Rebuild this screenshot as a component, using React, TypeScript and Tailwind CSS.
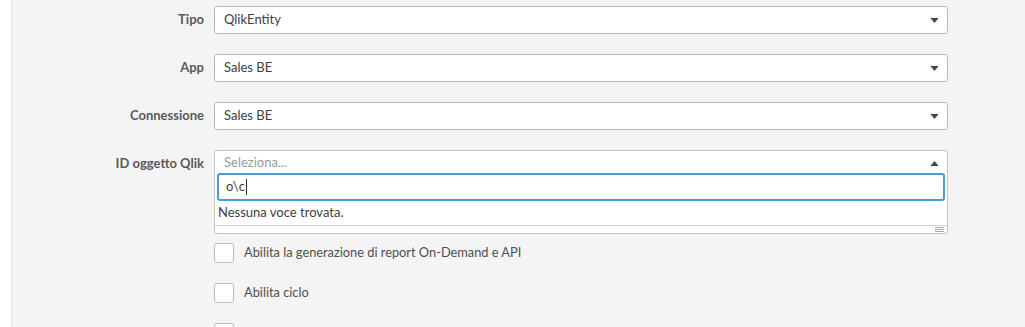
import React from "react";

const font = { fontFamily: "Lato, 'Open Sans', Arial, sans-serif" };

function Caret({ up = false }: { up?: boolean }) {
  return (
    <svg width="9" height="5" viewBox="0 0 10 6" className="shrink-0">
      {up ? <path d="M0 6 L5 0 L10 6 Z" fill="#454545" /> : <path d="M0 0 L10 0 L5 6 Z" fill="#454545" />}
    </svg>
  );
}

function SelectRow({ label, value }: { label: string; value: string }) {
  return (
    <>
      <div className="h-[28px] flex items-center justify-end text-[13px] font-bold text-[#595959]">{label}</div>
      <div className="h-[28px] flex items-center justify-between bg-white border border-[#b8b8b8] rounded-[3px] pl-[9px] pr-[8px] text-[13px] text-[#404040]">
        <span>{value}</span>
        <Caret />
      </div>
    </>
  );
}

function Checkbox({ label }: { label: string }) {
  return (
    <div className="flex items-center gap-[10px] h-[20px]">
      <div className="w-[20px] h-[20px] bg-white border border-[#bdbdbd] rounded-[3px] shrink-0" />
      <span className="text-[12.8px] text-[#4f4f4f]">{label}</span>
    </div>
  );
}

export default function App() {
  return (
    <div className="flex h-[327px] overflow-hidden bg-white" style={font}>
      <div className="w-[11px] bg-white shrink-0" />
      <div className="flex-1 bg-[#f4f4f4] border-l border-[#e2e2e2] pt-[6px]">
        <div className="grid grid-cols-[192px_734px] gap-x-[10px] gap-y-[20px]">
          <SelectRow label="Tipo" value="QlikEntity" />
          <SelectRow label="App" value="Sales BE" />
          <SelectRow label="Connessione" value="Sales BE" />

          <div className="h-[28px] flex items-center justify-end text-[13px] font-bold text-[#595959]">ID oggetto Qlik</div>
          <div className="bg-white border border-[#c4c4c4] rounded-[3px] h-[84px] flex flex-col">
            <div className="h-[22px] flex items-center justify-between pl-[9px] pr-[8px] pt-[2px]">
              <span className="text-[13px] text-[#9a9a9a]">Seleziona...</span>
              <Caret up />
            </div>
            <div className="mx-[2px] h-[28px] border-2 border-[#4a9ccc] rounded-[3px] flex items-center px-[7px] text-[13px] text-[#404040]">
              <span>o\c</span>
              <span className="w-px h-[16px] bg-[#333] ml-px" />
            </div>
            <div className="h-[24px] flex items-center px-[3px] text-[13px] text-[#404040]">Nessuna voce trovata.</div>
            <div className="flex-1 border-t border-[#cfcfcf] flex justify-end items-start pr-[3px] pt-px">
              <div className="flex flex-col gap-[1px] w-[9px]">
                <div className="h-px bg-[#a8a8a8]" />
                <div className="h-px bg-[#a8a8a8]" />
                <div className="h-px bg-[#a8a8a8]" />
              </div>
            </div>
          </div>
        </div>

        <div className="ml-[202px] mt-[9px] flex flex-col gap-[20px]">
          <Checkbox label="Abilita la generazione di report On-Demand e API" />
          <Checkbox label="Abilita ciclo" />
          <Checkbox label="" />
        </div>
      </div>
    </div>
  );
}
